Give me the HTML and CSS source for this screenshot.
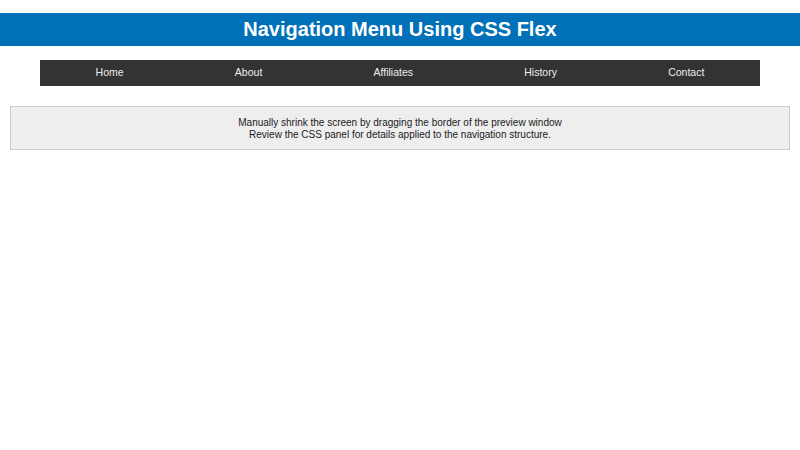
FILE: index.html
```html
<!DOCTYPE html>
<html>
<head>
<meta charset="utf-8">
<link rel="stylesheet" href="styles.css">
</head>
<body>
<header class="banner"><h1 class="title">Navigation Menu Using CSS Flex</h1></header>
<nav class="menu">
  <a class="menu-item" href="#">Home</a>
  <a class="menu-item" href="#">About</a>
  <a class="menu-item" href="#">Affiliates</a>
  <a class="menu-item" href="#">History</a>
  <a class="menu-item" href="#">Contact</a>
</nav>
<div class="note">
  <p class="note-line">Manually shrink the screen by dragging the border of the preview window</p>
  <p class="note-line">Review the CSS panel for details applied to the navigation structure.</p>
</div>
</body>
</html>
```
FILE: styles.css
```css
html, body { margin: 0; padding: 0; background: #fff; }
body { font-family: "Liberation Sans", Arial, sans-serif; padding-top: 13px; }
.banner { background: #0070b8; height: 33px; display: flex; align-items: center; justify-content: center; }
.title { margin: 0; color: #fff; font-size: 20px; font-weight: bold; }
.menu { margin: 14px 40px 0; height: 26px; box-sizing: border-box; padding-bottom: 2px; background: #333; display: flex; justify-content: space-around; align-items: center; }
.menu-item { color: #eee; text-decoration: none; font-size: 10.5px; }
.note { margin: 20px 10px 0; background: #eee; border: 1px solid #ccc; padding: 10px 0 9px; text-align: center; }
.note-line { margin: 0; font-size: 10px; line-height: 11.5px; color: #1a1a1a; }
```
